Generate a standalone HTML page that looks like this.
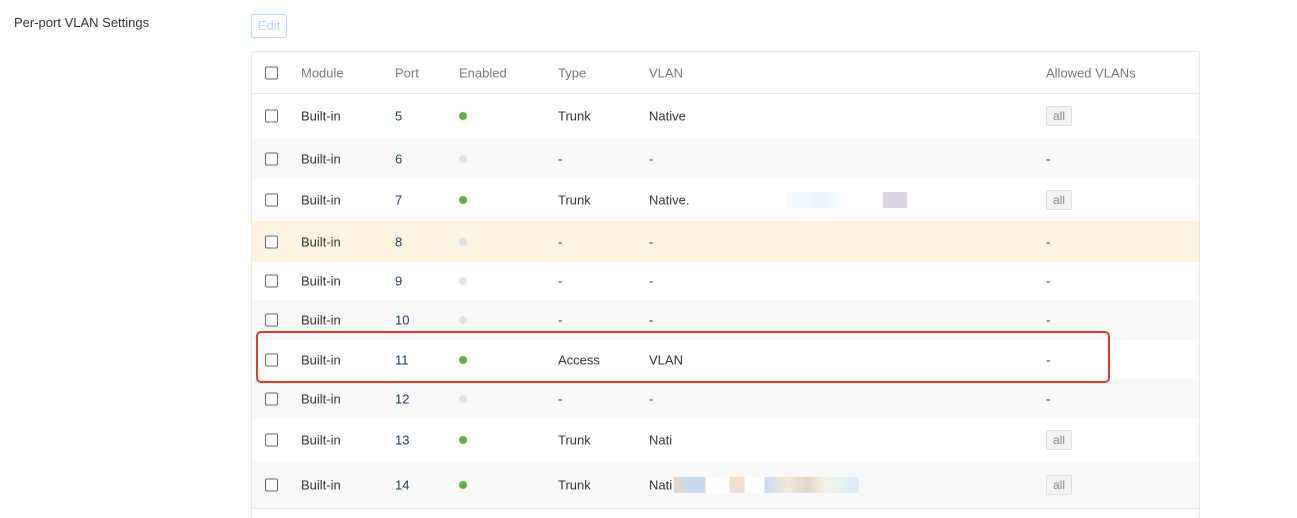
<!DOCTYPE html>
<html style="overflow:hidden;height:518px"><head><style>
body{margin:0;width:1297px;height:518px;background:#fff;font-family:"Liberation Sans",sans-serif;font-size:13px;color:#333;position:relative;overflow:hidden}
.lbl{position:absolute;left:14px;top:15px;font-size:13px;color:#333}
.edit{position:absolute;left:251px;top:14px;width:34px;height:22px;border:1px solid #b9d8f7;border-radius:3px;color:#b9d8f7;font-size:13px;line-height:22px;text-align:center}
.tbl{position:absolute;left:251px;top:51px;width:947px;height:470px;border:1px solid #e8e8e8;border-bottom:none;border-radius:3px 3px 0 0}
.row{position:absolute;left:0;width:947px}
.row span{position:absolute;top:50%;transform:translateY(-50%)}
.cb{left:13px;width:11px;height:11px;border:1px solid #666;border-radius:2px;background:#fff}
.c1{left:49px}.c2{left:143px;color:#1d3a5e}.c4{left:306px}.c5{left:397px}.c6{left:794px}
.dot{left:207px;width:8px;height:8px;border-radius:50%}
.on{background:#5bb43c}.off{background:#e2e2e2}
.g{background:#f9f9f9}.y{background:#fef4e0}
.hd{color:#777;border-bottom:1px solid #e8e8e8}
.all{left:794px;width:24px;height:18px;border:1px solid #ddd;background:#f3f3f3;border-radius:2px;color:#888;font-size:12px;text-align:center;line-height:18px}
.box{position:absolute;left:256px;top:331px;width:850px;height:48px;border:2px solid #e53b2c;border-radius:5px}
</style></head><body>
<div class="lbl">Per-port VLAN Settings</div>
<div class="edit">Edit</div>
<div class="tbl">
<div class="row hd" style="top:0;height:41px"><span class="cb"></span><span class="c1">Module</span><span class="c2" style="color:#777">Port</span><span style="left:207px">Enabled</span><span class="c4">Type</span><span class="c5">VLAN</span><span class="c6">Allowed VLANs</span></div>
<div class="row" style="top:42px;height:44px"><span class="cb"></span><span class="c1">Built-in</span><span class="c2">5</span><span class="dot on"></span><span class="c4">Trunk</span><span class="c5">Native</span><span class="all">all</span></div>
<div class="row g" style="top:86px;height:41px"><span class="cb"></span><span class="c1">Built-in</span><span class="c2">6</span><span class="dot off"></span><span class="c4">-</span><span class="c5">-</span><span class="c6">-</span></div>
<div class="row" style="top:127px;height:42px"><span class="cb"></span><span class="c1">Built-in</span><span class="c2">7</span><span class="dot on"></span><span class="c4">Trunk</span><span class="c5">Native.</span><span style="left:535px;width:120px;height:16px;background:linear-gradient(90deg,#f4fbff,#eaf6fc 30%,#fff 50%,#fff 80%,#dcd6e4 80%)"></span><span class="all">all</span></div>
<div class="row y" style="top:169px;height:41px"><span class="cb"></span><span class="c1">Built-in</span><span class="c2">8</span><span class="dot off"></span><span class="c4">-</span><span class="c5">-</span><span class="c6">-</span></div>
<div class="row" style="top:210px;height:38px"><span class="cb"></span><span class="c1">Built-in</span><span class="c2">9</span><span class="dot off"></span><span class="c4">-</span><span class="c5">-</span><span class="c6">-</span></div>
<div class="row g" style="top:248px;height:40px"><span class="cb"></span><span class="c1">Built-in</span><span class="c2">10</span><span class="dot off"></span><span class="c4">-</span><span class="c5">-</span><span class="c6">-</span></div>
<div class="row" style="top:288px;height:39px"><span class="cb"></span><span class="c1">Built-in</span><span class="c2">11</span><span class="dot on"></span><span class="c4">Access</span><span class="c5">VLAN</span><span class="c6">-</span></div>
<div class="row g" style="top:327px;height:39px"><span class="cb"></span><span class="c1">Built-in</span><span class="c2">12</span><span class="dot off"></span><span class="c4">-</span><span class="c5">-</span><span class="c6">-</span></div>
<div class="row" style="top:366px;height:44px"><span class="cb"></span><span class="c1">Built-in</span><span class="c2">13</span><span class="dot on"></span><span class="c4">Trunk</span><span class="c5">Nati</span><span class="all">all</span></div>
<div class="row g" style="top:410px;height:46px;border-bottom:1px solid #e8e8e8"><span class="cb"></span><span class="c1">Built-in</span><span class="c2">14</span><span class="dot on"></span><span class="c4">Trunk</span><span class="c5">Nati</span><span style="left:422px;width:185px;height:16px;background:linear-gradient(90deg,#ead9c6,#c9dbee 8%,#c9dbee 17%,#fff 17%,#fff 30%,#eee0d2 30%,#eee0d2 38%,#fff 38%,#fff 49%,#cadcf0 49%,#f3e8d9 62%,#e4d4c8 72%,#f5f2e6 82%,#e0eef6 95%)"></span><span class="all">all</span></div>
</div>
<div class="box"></div>
</body></html>
